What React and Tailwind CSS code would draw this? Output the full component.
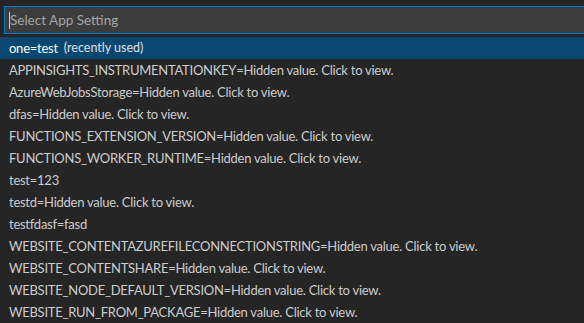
const items = [
  "APPINSIGHTS_INSTRUMENTATIONKEY=Hidden value. Click to view.",
  "AzureWebJobsStorage=Hidden value. Click to view.",
  "dfas=Hidden value. Click to view.",
  "FUNCTIONS_EXTENSION_VERSION=Hidden value. Click to view.",
  "FUNCTIONS_WORKER_RUNTIME=Hidden value. Click to view.",
  "test=123",
  "testd=Hidden value. Click to view.",
  "testfdasf=fasd",
  "WEBSITE_CONTENTAZUREFILECONNECTIONSTRING=Hidden value. Click to view.",
  "WEBSITE_CONTENTSHARE=Hidden value. Click to view.",
  "WEBSITE_NODE_DEFAULT_VERSION=Hidden value. Click to view.",
  "WEBSITE_RUN_FROM_PACKAGE=Hidden value. Click to view.",
];

export default function App() {
  return (
    <div
      className="w-[584px] h-[323px] overflow-hidden bg-[#252526] text-[#cccccc] text-[13px]"
      style={{ fontFamily: 'Lato, "Noto Sans", sans-serif' }}
    >
      <div className="pt-[6px] pl-[4px] pb-[3px]">
        <div className="h-[28px] bg-[#3c3c3c] border-l border-t border-b border-[#007acc] flex items-center pl-[4px]">
          <span className="w-px h-[17px] bg-[#cccccc]" />
          <span className="text-[#a6a6a6] text-[13.5px]">Select App Setting</span>
        </div>
      </div>
      <div className="h-[22px] bg-[#094771] text-white flex items-center pl-[9px] pt-px whitespace-nowrap tracking-[-0.25px]">
        one=test
        <span className="ml-[6px] text-[12.5px] tracking-normal text-[#e0e0e0]">(recently used)</span>
      </div>
      {items.map((t) => (
        <div key={t} className="h-[22px] flex items-center pl-[9px] pt-px whitespace-nowrap tracking-[-0.25px]">
          {t}
        </div>
      ))}
    </div>
  );
}
